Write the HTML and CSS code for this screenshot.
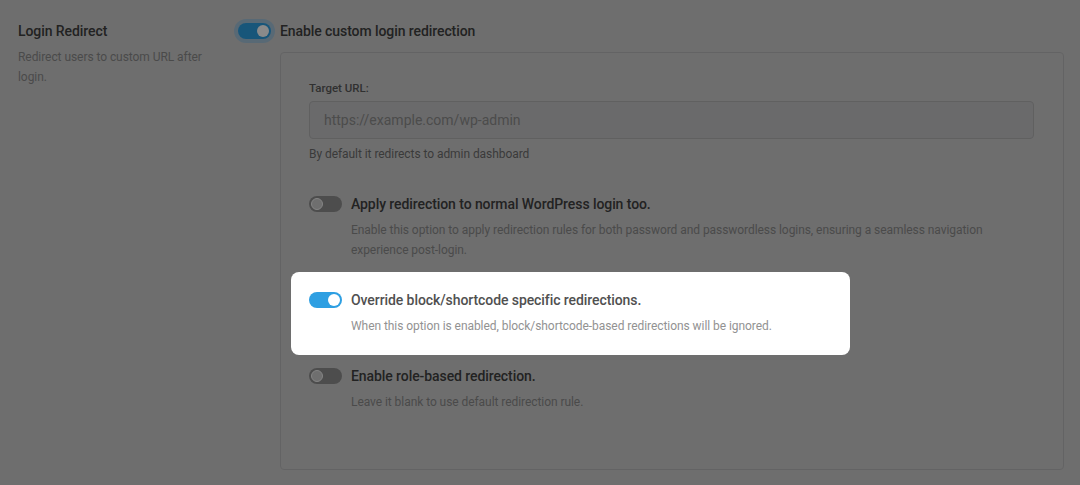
FILE: index.html
```html
<!DOCTYPE html>
<html lang="en">
<head>
<meta charset="utf-8">
<title>Login Redirect</title>
<link rel="stylesheet" href="styles.css">
</head>
<body>
<section class="setting">
  <div class="setting-info">
    <h3 class="setting-title">Login Redirect</h3>
    <p class="setting-desc">Redirect users to custom URL after login.</p>
  </div>
  <div class="setting-body">
    <div class="switch-line">
      <span class="toggle is-on is-focused"><span class="knob"></span></span>
      <span class="switch-label">Enable custom login redirection</span>
    </div>
    <div class="card">
      <label class="field-label">Target URL:</label>
      <div class="input"><span class="placeholder">https://example.com/wp-admin</span></div>
      <p class="hint">By default it redirects to admin dashboard</p>
      <div class="options">
        <div class="option">
          <span class="toggle"><span class="knob"></span></span>
          <div class="option-title">Apply redirection to normal WordPress login too.</div>
          <p class="option-desc">Enable this option to apply redirection rules for both password and passwordless logins, ensuring a seamless navigation experience post-login.</p>
        </div>
        <div class="option is-spotlight">
          <span class="toggle is-on"><span class="knob"></span></span>
          <div class="option-title">Override block/shortcode specific redirections.</div>
          <p class="option-desc">When this option is enabled, block/shortcode-based redirections will be ignored.</p>
        </div>
        <div class="option">
          <span class="toggle"><span class="knob"></span></span>
          <div class="option-title">Enable role-based redirection.</div>
          <p class="option-desc">Leave it blank to use default redirection rule.</p>
        </div>
      </div>
    </div>
  </div>
</section>
</body>
</html>
```

FILE: styles.css
```css
* { box-sizing: border-box; }

html, body {
  margin: 0;
  height: 100%;
}

body {
  background: #cccccc;
  font-family: Roboto, "Liberation Sans", sans-serif;
  color: #444;
  overflow: hidden;
}

.setting {
  display: grid;
  grid-template-columns: 220px 1fr;
  padding: 21px 16px 0 18px;
}

.setting-title {
  margin: 0;
  font-size: 14px;
  line-height: 20px;
  font-weight: 500;
  letter-spacing: -0.08px;
  color: #404040;
}

.setting-desc {
  margin: 6px 0 0;
  width: 200px;
  font-size: 12px;
  line-height: 20px;
  letter-spacing: -0.06px;
  color: #8a8a8a;
}

.switch-line {
  display: flex;
  align-items: center;
  gap: 9px;
  height: 20px;
}

.switch-label {
  font-size: 14px;
  line-height: 20px;
  font-weight: 500;
  letter-spacing: -0.08px;
  color: #404040;
}

.toggle {
  position: relative;
  display: inline-block;
  flex: none;
  width: 33px;
  height: 16px;
  border-radius: 8px;
  background: #8e8e8e;
}

.toggle .knob {
  position: absolute;
  top: 2px;
  left: 2px;
  width: 12px;
  height: 12px;
  border-radius: 50%;
  background: #cdcdcd;
  border: 1px solid #f4f4f4;
}

.toggle.is-on {
  background: #2e9fe2;
}

.toggle.is-on .knob {
  left: auto;
  right: 2px;
  background: #fff;
  border: none;
}

.toggle.is-focused {
  box-shadow: 0 0 0 4px #a3c3d9;
}

.card {
  margin: 11px 0 0 42px;
  border: 1px solid #b8b8b9;
  border-radius: 4px;
  padding: 27px 29px 57px 28px;
}

.field-label {
  display: block;
  font-size: 11.5px;
  line-height: 16px;
  font-weight: 500;
  color: #5a5a5a;
}

.input {
  margin-top: 5px;
  height: 38px;
  border: 1px solid #b1b1b2;
  border-radius: 4px;
  background: #c5c5c6;
  padding: 0 14px;
  display: flex;
  align-items: center;
}

.placeholder {
  font-size: 14px;
  color: #8c8c8c;
}

.hint {
  margin: 6px 0 0;
  font-size: 12px;
  line-height: 18px;
  letter-spacing: -0.06px;
  color: #6c6c6c;
}

.options {
  margin-top: 31px;
  display: flex;
  flex-direction: column;
  gap: 30px;
}

.option {
  display: grid;
  grid-template-columns: 34px 1fr;
  column-gap: 8px;
  align-items: start;
}

.option .toggle {
  margin-top: 2px;
}

.option-title {
  font-size: 14px;
  line-height: 20px;
  font-weight: 500;
  letter-spacing: -0.08px;
  color: #404040;
}

.option-desc {
  grid-column: 2;
  margin: 6px 0 0;
  font-size: 12px;
  line-height: 20px;
  letter-spacing: -0.06px;
  color: #8a8a8a;
}

.option.is-spotlight {
  position: relative;
  z-index: 5;
  width: 559px;
  margin: -18px 0 -19px -18px;
  padding: 18px 18px 19px 18px;
  background: #fff;
  border-radius: 8px;
  box-shadow: 0 0 0 3000px rgba(0, 0, 0, 0.46);
}

.option.is-spotlight .option-title {
  color: #505050;
}

.option.is-spotlight .option-desc {
  color: #929292;
}
```
